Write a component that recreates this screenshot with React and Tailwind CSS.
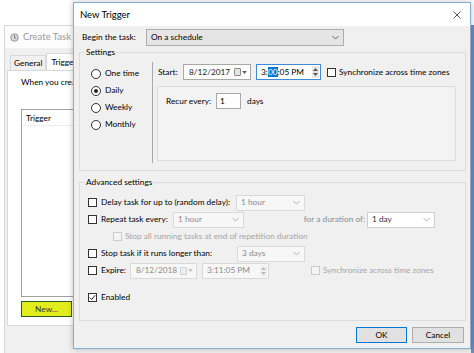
import React from 'react'

const Chevron = ({ color = '#6a6a6a' }) => (
  <svg width="7" height="5" viewBox="0 0 7 5" className="shrink-0">
    <path d="M0.5 1 L3.5 4 L6.5 1" fill="none" stroke={color} strokeWidth="0.9" />
  </svg>
)

const Check = ({ checked, disabled }) => (
  <span
    className={`w-[9px] h-[9px] border flex items-center justify-center shrink-0 ${
      disabled ? 'border-[#cccccc] bg-[#f4f4f4]' : 'border-[#333333] bg-white'
    }`}
  >
    {checked && (
      <svg width="7" height="7" viewBox="0 0 7 7">
        <path d="M0.8 3.6 L2.7 5.5 L6.2 1.2" fill="none" stroke="#222" strokeWidth="1" />
      </svg>
    )}
  </span>
)

const Radio = ({ label, on }) => (
  <div className="h-[17px] flex items-center gap-[4px]">
    <span className="w-[10px] h-[10px] rounded-full border border-[#333333] bg-white flex items-center justify-center">
      {on && <span className="w-[4px] h-[4px] rounded-full bg-[#222]" />}
    </span>
    <span>{label}</span>
  </div>
)

const Combo = ({ text, className, dim }) => (
  <div
    className={`h-[16px] border flex items-center justify-between pl-[4px] pr-[4px] ${
      dim ? 'border-[#d9d9d9] bg-[#f7f7f7] text-[#8c8c8c]' : 'border-[#cfcfcf] bg-white text-[#333]'
    } ${className}`}
  >
    <span>{text}</span>
    <Chevron color="#a8a8a8" />
  </div>
)

const DateBox = ({ text, className, dim }) => (
  <div
    className={`h-[16px] border flex items-center justify-between pl-[5px] pr-[3px] ${
      dim ? 'border-[#d9d9d9] bg-[#f7f7f7] text-[#8c8c8c]' : 'border-[#a8a8a8] bg-white text-[#222]'
    } ${className}`}
  >
    <span>{text}</span>
    <span className="flex items-center gap-[1px]">
      <span className={`w-[7px] h-[8px] border rounded-[1px] ${dim ? 'border-[#cfcfcf] bg-[#eeeeee]' : 'border-[#8c8c8c] bg-[#e6e6e6]'}`} />
      <svg width="5" height="3" viewBox="0 0 5 3">
        <path d="M0 0 L5 0 L2.5 3 Z" fill={dim ? '#c4c4c4' : '#666'} />
      </svg>
    </span>
  </div>
)

const Spin = ({ dim }) => (
  <span className={`flex flex-col items-center justify-center gap-[2px] w-[7px] h-[12px] ${dim ? 'bg-[#f1f1f1]' : 'bg-[#e6e6e6]'}`}>
    <svg width="5" height="3" viewBox="0 0 5 3">
      <path d="M0 3 L5 3 L2.5 0 Z" fill={dim ? '#bbb' : '#555'} />
    </svg>
    <svg width="5" height="3" viewBox="0 0 5 3">
      <path d="M0 0 L5 0 L2.5 3 Z" fill={dim ? '#bbb' : '#555'} />
    </svg>
  </span>
)

function CreateTask() {
  return (
    <div className="flex-1 flex flex-col ml-[4px] border-l border-t border-[#d6d6d6]">
      <div className="h-[22px] bg-[#fcfcfc] flex items-center gap-[4px] pl-[5px] text-[#9a9a9a] text-[9.5px]">
        <svg width="9" height="9" viewBox="0 0 10 10">
          <circle cx="5" cy="5" r="4.2" fill="#d8d8d8" stroke="#8d8d8d" strokeWidth="1" />
          <path d="M5 2.4 L5 5 L7 6.2" fill="none" stroke="#666" strokeWidth="1" />
        </svg>
        <span>Create Task</span>
      </div>
      <div className="flex-1 bg-[#f0f0f0] flex flex-col pl-[2px] pt-[5px] pb-[27px]">
        <div className="flex items-end h-[17px] pl-[3px]">
          <div className="h-[15px] px-[3px] flex items-center border border-b-0 border-[#d9d9d9] bg-[#f0f0f0]">General</div>
          <div className="h-[17px] px-[4px] flex items-center border border-b-0 border-[#d9d9d9] bg-white">Triggers</div>
        </div>
        <div className="flex-1 bg-white border border-[#d9d9d9] flex flex-col pl-[13px] pt-[4px] pb-[8px]">
          <div className="h-[14px] flex items-center whitespace-nowrap">
            When you create a task, you can specify the conditions that will trigger the task.
          </div>
          <div className="mt-[20px] h-[188px] border border-[#a0a0a0] bg-white">
            <div className="h-[16px] flex items-center pl-[4px] pt-[2px] border-b border-[#ededed]">Trigger</div>
          </div>
          <div className="mt-[4px] w-[51px] h-[16px] bg-[#e3ec1d] border-[1.5px] border-[#2f5f1a] flex items-center justify-center text-[#333]">
            New...
          </div>
        </div>
      </div>
    </div>
  )
}

function NewTrigger() {
  return (
    <div className="absolute left-[73px] top-[2px] w-[398px] h-[347px] border border-[#86afd8] bg-[#f0f0f0] flex flex-col shadow-[0_0_6px_rgba(0,0,0,0.25)]">
      <div className="h-[23px] bg-white flex items-center justify-between pl-[6px] pr-[6px]">
        <span className="text-[9.5px]">New Trigger</span>
        <svg width="8" height="8" viewBox="0 0 8 8" className="mr-[3px]">
          <path d="M0.5 0.5 L7.5 7.5 M7.5 0.5 L0.5 7.5" stroke="#444" strokeWidth="0.9" />
        </svg>
      </div>
      <div className="flex-1 flex flex-col pl-[5px] pr-[4px]">
        <div className="mt-[3px] flex items-center h-[17px]">
          <span className="pl-[3px] w-[67px]">Begin the task:</span>
          <div className="w-[198px] h-[17px] bg-[#e5e5e5] border border-[#adadad] flex items-center justify-between pl-[4px] pr-[4px]">
            <span>On a schedule</span>
            <Chevron color="#555" />
          </div>
        </div>

        <fieldset className="mt-[1px] border border-[#dcdcdc] h-[124px]">
          <legend className="ml-[5px] px-[1px] leading-[10px]">Settings</legend>
          <div className="flex h-[113px]">
            <div className="w-[72px] pl-[11px] pt-[8px] flex flex-col">
              <Radio label="One time" />
              <Radio label="Daily" on />
              <Radio label="Weekly" />
              <Radio label="Monthly" />
            </div>
            <div className="mt-[5px] mb-[7px] border-l border-[#a9a9a9]" />
            <div className="flex-1 pl-[4px] pr-[9px] pt-[7px] flex flex-col">
              <div className="h-[16px] flex items-center">
                <span className="pl-[1px] w-[26px]">Start:</span>
                <DateBox text="8/12/2017" className="w-[68px]" />
                <div className="ml-[5px] w-[65px] h-[16px] border border-[#3c8ad8] bg-white flex items-center justify-between pl-[4px] pr-[1px]">
                  <span>
                    3:<span className="bg-[#0078d7] text-white">00</span>:05 PM
                  </span>
                  <Spin />
                </div>
                <span className="ml-[6px]"><Check /></span>
                <span className="ml-[3px] whitespace-nowrap">Synchronize across time zones</span>
              </div>
              <div className="mt-[6px] h-[75px] border border-[#dcdcdc] bg-[#f3f3f3] pl-[8px] pt-[6px]">
                <div className="h-[16px] flex items-center">
                  <span className="w-[50px]">Recur every:</span>
                  <div className="w-[25px] h-[16px] border border-[#a8a8a8] bg-white pl-[3px] flex items-center">1</div>
                  <span className="ml-[6px]">days</span>
                </div>
              </div>
            </div>
          </div>
        </fieldset>

        <fieldset className="mt-[6px] border border-[#dcdcdc] h-[144px]">
          <legend className="ml-[5px] px-[1px] leading-[10px]">Advanced settings</legend>
          <div className="pl-[8px] pt-[7px] flex flex-col">
            <div className="h-[17px] flex items-center">
              <Check />
              <span className="ml-[4px] w-[135px] whitespace-nowrap">Delay task for up to (random delay):</span>
              <Combo text="1 hour" className="w-[69px]" dim />
            </div>
            <div className="h-[17px] flex items-center">
              <Check />
              <span className="ml-[4px] w-[72px] whitespace-nowrap">Repeat task every:</span>
              <Combo text="1 hour" className="w-[71px]" dim />
              <span className="w-[123px] text-right pr-[2px] text-[#8c8c8c]">for a duration of:</span>
              <Combo text="1 day" className="w-[68px]" />
            </div>
            <div className="h-[17px] flex items-center pl-[25px] text-[#a6a6a6]">
              <Check disabled />
              <span className="ml-[3px] whitespace-nowrap">Stop all running tasks at end of repetition duration</span>
            </div>
            <div className="h-[17px] flex items-center">
              <Check />
              <span className="ml-[4px] w-[136px] whitespace-nowrap">Stop task if it runs longer than:</span>
              <Combo text="3 days" className="w-[68px]" dim />
            </div>
            <div className="h-[17px] flex items-center">
              <Check />
              <span className="ml-[4px] w-[29px]">Expire:</span>
              <DateBox text="8/12/2018" className="w-[67px]" dim />
              <div className="ml-[5px] w-[67px] h-[16px] border border-[#d9d9d9] bg-[#f7f7f7] text-[#8c8c8c] flex items-center justify-between pl-[4px] pr-[1px]">
                <span>3:11:05 PM</span>
                <Spin dim />
              </div>
              <span className="ml-[42px]"><Check disabled /></span>
              <span className="ml-[3px] whitespace-nowrap text-[#a6a6a6]">Synchronize across time zones</span>
            </div>
            <div className="mt-[10px] h-[17px] flex items-center">
              <Check checked />
              <span className="ml-[4px]">Enabled</span>
            </div>
          </div>
        </fieldset>

        <div className="mt-[6px] flex justify-end gap-[5px] pr-[2px]">
          <div className="w-[51px] h-[16px] border border-[#0078d7] bg-[#e1e1e1] flex items-center justify-center">OK</div>
          <div className="w-[52px] h-[16px] border border-[#adadad] bg-[#e1e1e1] flex items-center justify-center">Cancel</div>
        </div>
      </div>
    </div>
  )
}

export default function App() {
  return (
    <div className="relative w-[474px] h-[353px] overflow-hidden bg-white text-[8.3px] leading-none text-black font-['Lato',sans-serif] flex flex-col">
      <div className="h-[25px] shrink-0" />
      <div className="flex-1 flex">
        <CreateTask />
        <div className="w-[3px] bg-[#6c8fb8]" />
      </div>
      <div className="h-[4px] shrink-0 bg-gradient-to-r from-[#3a3a3a] via-[#6f7c8c] to-[#566f92]" />
      <NewTrigger />
    </div>
  )
}
